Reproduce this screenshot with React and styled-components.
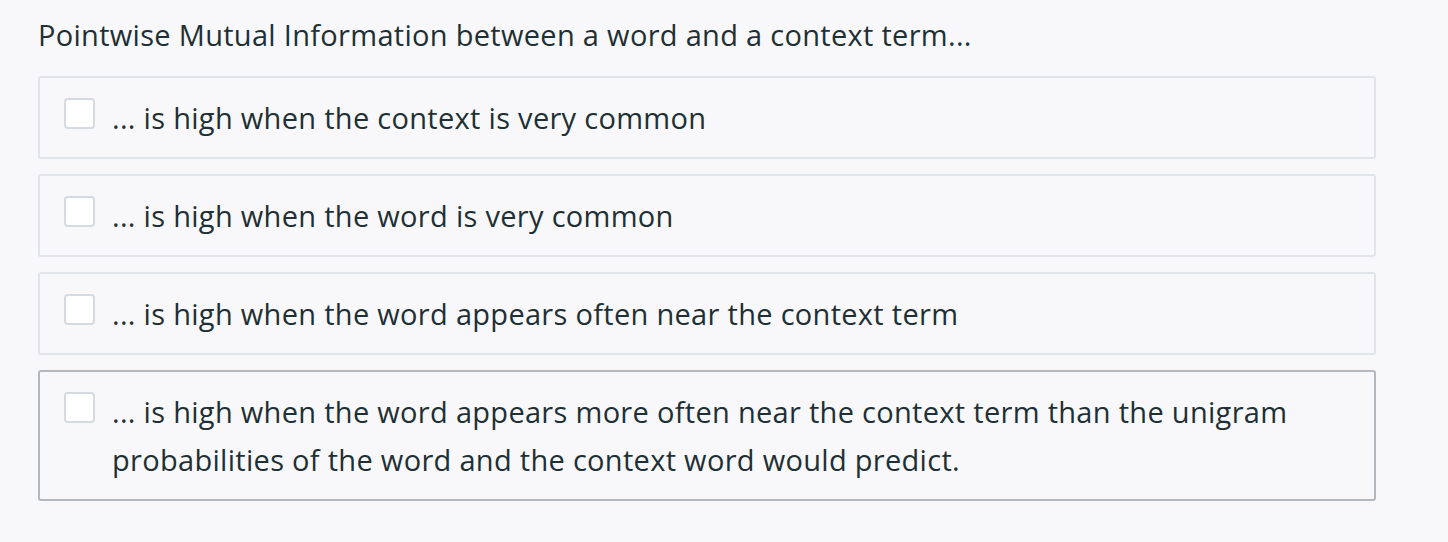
import React from "react";
import styled, { createGlobalStyle } from "styled-components";

const GlobalStyle = createGlobalStyle`
  body {
    margin: 0;
    background: #f8f8fa;
    font-family: "Open Sans", Lato, sans-serif;
    color: #1f3035;
  }
`;

const options = [
  "... is high when the context is very common",
  "... is high when the word is very common",
  "... is high when the word appears often near the context term",
  "... is high when the word appears more often near the context term than the unigram probabilities of the word and the context word would predict.",
];

function App() {
  return (
    <Page>
      <GlobalStyle />
      <Question>Pointwise Mutual Information between a word and a context term...</Question>
      <OptionList>
        {options.map((text, i) => (
          <Option key={i} $active={i === options.length - 1}>
            <Box />
            <Label>{text}</Label>
          </Option>
        ))}
      </OptionList>
    </Page>
  );
}

export default App;

const Page = styled.div`
  padding: 11px 72px 40px 38px;
`;

const Question = styled.div`
  font-size: 29px;
  letter-spacing: 0.3px;
  line-height: 48px;
  margin-bottom: 17px;
`;

const OptionList = styled.div`
  display: flex;
  flex-direction: column;
  gap: 15px;
`;

const Option = styled.div`
  display: flex;
  align-items: flex-start;
  gap: 17px;
  padding: 16px 24px 15px;
  border: 2px solid ${(p) => (p.$active ? "#b3b8bf" : "#e1e4e9")};
  border-radius: 3px;
`;

const Box = styled.div`
  flex: none;
  width: 27px;
  height: 27px;
  margin-top: 4px;
  border: 2px solid #d5dae0;
  border-radius: 4px;
  background: #fff;
`;

const Label = styled.div`
  font-size: 29px;
  letter-spacing: 0.3px;
  line-height: 48px;
  padding-right: 40px;
`;
